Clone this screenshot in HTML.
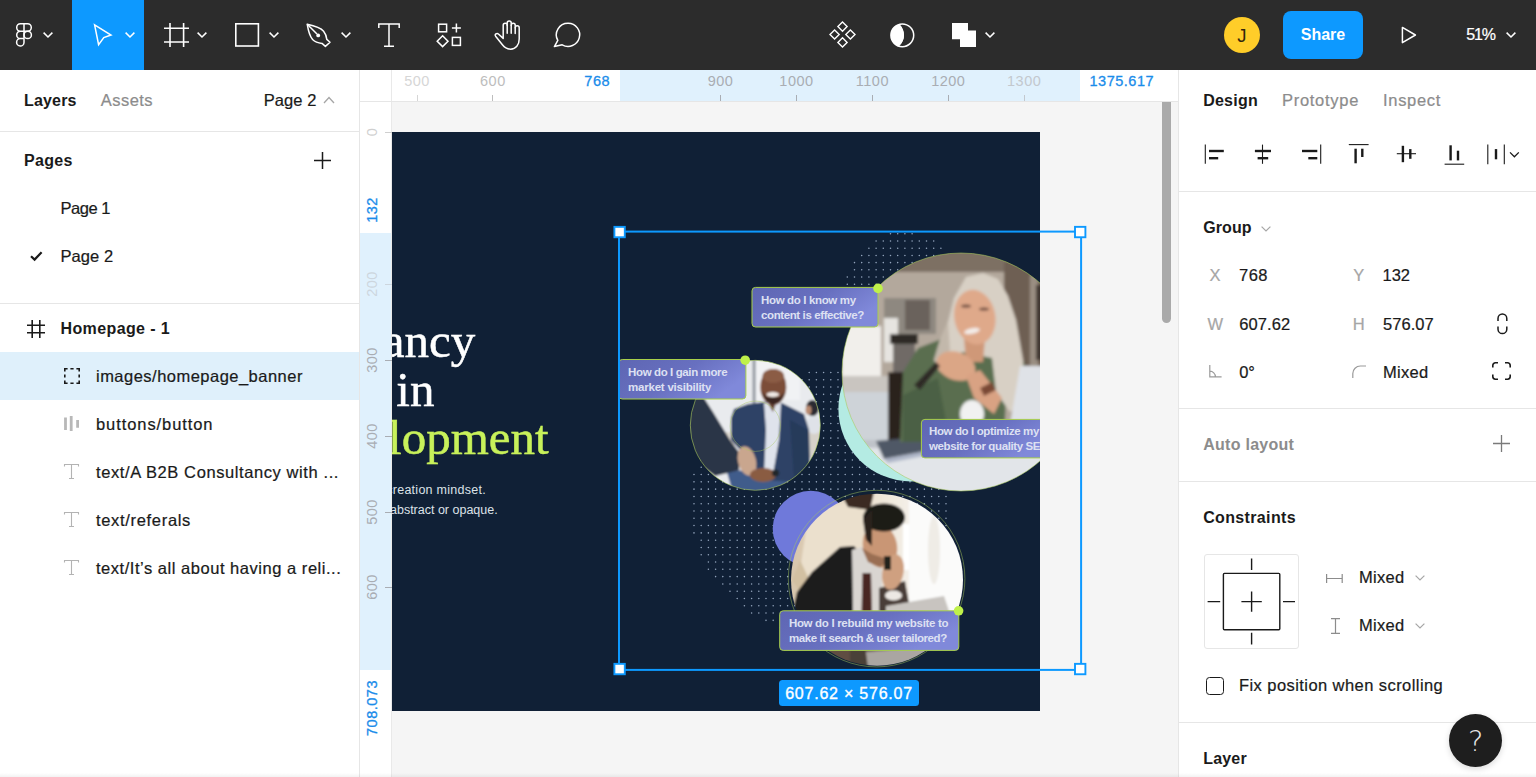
<!DOCTYPE html>
<html lang="en">
<head>
<meta charset="utf-8">
<title>Figma – Homepage</title>
<style>
*{box-sizing:border-box;margin:0;padding:0}
html,body{width:1536px;height:777px;overflow:hidden;background:#f5f5f5}
body{font-family:"Liberation Sans",Arial,sans-serif;font-size:16px;color:#1a1a1a;position:relative}
.abs{position:absolute}
.t{position:absolute;white-space:nowrap;line-height:20px;height:20px}
.b{font-weight:bold}
.t:not(.b){-webkit-text-stroke:.22px currentColor}
.g{color:#8c8c8c}
.g2{color:#a6a6a6;font-size:16.5px}
/* toolbar */
#toolbar{position:absolute;left:0;top:0;width:1536px;height:70px;background:#2c2c2c}
#toolbar svg{position:absolute;overflow:visible}
#tool-active{position:absolute;left:72px;top:0;width:72px;height:70px;background:#0d99ff}
/* left panel */
#left{position:absolute;left:0;top:70px;width:360px;height:707px;background:#fff;border-right:1px solid #e6e6e6}
.hr{position:absolute;height:1px;background:#e6e6e6}
/* rulers */
#ruler-top{position:absolute;left:360px;top:70px;width:818px;height:32px;background:#fff;border-bottom:1px solid #e6e6e6}
#ruler-left{position:absolute;left:360px;top:102px;width:32px;height:675px;background:#fff;border-right:1px solid #e9e9e9}
.rl{position:absolute;font-size:14.5px;letter-spacing:.5px;line-height:16px;height:16px;color:#b8b8b8;white-space:nowrap;transform:translateX(-50%)}
.rv{position:absolute;font-size:14.5px;letter-spacing:.5px;line-height:16px;height:16px;color:#b8b8b8;white-space:nowrap;transform-origin:0 0;transform:rotate(-90deg) translateX(-50%)}
.tick{position:absolute;background:#b0b0b0}
/* canvas */
#canvas{position:absolute;left:392px;top:102px;width:786px;height:675px;background:#f5f5f5;overflow:hidden}
#frame{position:absolute;left:0;top:30px;width:648px;height:579px;background:#102036;overflow:hidden}
.hd{position:absolute;white-space:nowrap;font-family:"Liberation Serif",serif;font-size:49px;line-height:56px;color:#fff;-webkit-text-stroke:.5px currentColor}
.sm{position:absolute;white-space:nowrap;font-size:12.5px;line-height:16px;color:#dde2e8;letter-spacing:.15px}
.lt{font-family:"Liberation Sans",sans-serif;font-weight:bold;font-size:11.5px;fill:#dde0f2}
.hdl{position:absolute;width:12.2px;height:12.2px;background:#fff;border:1.8px solid #0d99ff}
/* right panel */
#right{position:absolute;left:1178px;top:70px;width:358px;height:707px;background:#fff;border-left:1px solid #e6e6e6}
#right svg,#left svg{position:absolute;overflow:visible}
</style>
</head>
<body>

<!-- ================= TOOLBAR ================= -->
<div id="toolbar">
  <div id="tool-active"></div>
  <!-- figma menu -->
  <svg style="left:15.8px;top:23px" width="16" height="24" viewBox="0 0 16 24" fill="none" stroke="#fff" stroke-width="1.5"><path d="M8 .8H4.4a3.7 3.7 0 0 0 0 7.4H8zM8 .8h3.6a3.7 3.7 0 0 1 0 7.4H8zM8 8.2H4.4a3.7 3.7 0 0 0 0 7.4H8zM8 15.6H4.4A3.7 3.7 0 1 0 8 19.4z"/><circle cx="11.7" cy="11.9" r="3.7"/></svg>
  <svg style="left:43px;top:32px" width="10" height="6" viewBox="0 0 10 6"><path d="M0.6 0.6 L5 5 L9.4 0.6" fill="none" stroke="#fff" stroke-width="1.5"/></svg>
  <!-- move -->
  <svg style="left:93px;top:23px" width="21" height="24" viewBox="0 0 21 24"><path d="M1.6 1.9 L18 12 L10.8 14.6 L5.6 21.6 Z" fill="none" stroke="#fff" stroke-width="1.5" stroke-linejoin="miter"/></svg>
  <svg style="left:125px;top:32px" width="10" height="6" viewBox="0 0 10 6"><path d="M0.6 0.6 L5 5 L9.4 0.6" fill="none" stroke="#fff" stroke-width="1.5"/></svg>
  <!-- frame -->
  <svg style="left:164px;top:23px" width="25" height="24" viewBox="0 0 25 24"><path d="M6 0v24M19.6 0v24M0 5.2h25M0 19h25" stroke="#fff" stroke-width="1.6"/></svg>
  <svg style="left:196.5px;top:32px" width="10" height="6" viewBox="0 0 10 6"><path d="M0.6 0.6 L5 5 L9.4 0.6" fill="none" stroke="#fff" stroke-width="1.5"/></svg>
  <!-- rectangle -->
  <svg style="left:234.8px;top:23.2px" width="24" height="24" viewBox="0 0 24 24"><rect x=".8" y=".8" width="22.6" height="22.2" fill="none" stroke="#fff" stroke-width="1.6"/></svg>
  <svg style="left:268.8px;top:32px" width="10" height="6" viewBox="0 0 10 6"><path d="M0.6 0.6 L5 5 L9.4 0.6" fill="none" stroke="#fff" stroke-width="1.5"/></svg>
  <!-- pen -->
  <svg style="left:306px;top:22.5px" width="25" height="24" viewBox="0 0 25 24" fill="none" stroke="#fff" stroke-width="1.5" stroke-linejoin="round"><path d="M1.2 1.2 C8 2.6 14.5 4.4 17.6 8.2 C20 11.2 20.6 14 20.8 16.4 L24 19.2 L19.4 23.4 L16 20.4 C13 20.2 9.4 19.6 6.6 16.6 C3.4 13 2.2 7.4 1.2 1.2 Z"/><path d="M1.2 1.2 L11 11"/><circle cx="12.2" cy="12.4" r="1.9" fill="#fff" stroke="none"/></svg>
  <svg style="left:340.8px;top:32px" width="10" height="6" viewBox="0 0 10 6"><path d="M0.6 0.6 L5 5 L9.4 0.6" fill="none" stroke="#fff" stroke-width="1.5"/></svg>
  <!-- text -->
  <svg style="left:378px;top:23px" width="22" height="24" viewBox="0 0 22 24"><path d="M.8 5V1h20.4v4M11 1v22.2M6 23.2h10" fill="none" stroke="#fff" stroke-width="1.5"/></svg>
  <!-- resources -->
  <svg style="left:437px;top:22.6px" width="25" height="24" viewBox="0 0 25 24" fill="none" stroke="#fff" stroke-width="1.5"><rect x="1.6" y="1.2" width="8" height="7.6"/><path d="M19.4 .4v9M14.9 4.9h9"/><path d="M5.6 12.8l5.4 5.4-5.4 5.4-5.4-5.4z"/><rect x="15.4" y="14.4" width="8" height="8"/></svg>
  <!-- hand -->
  <svg style="left:494px;top:19px" width="28" height="32" viewBox="0 0 28 32" fill="none" stroke="#fff" stroke-width="1.5" stroke-linecap="round" stroke-linejoin="round"><path d="M9.2 16.5V6.2a2 2 0 0 1 4 0V4a2 2 0 0 1 4 0v2.2a2 2 0 0 1 4 0v2.6a2 2 0 0 1 4 0V20c0 6-3.4 10.2-8.6 10.2c-4 0-6-1.6-8.2-4.4L1.6 17.2c-1.2-1.8 1.2-3.6 2.8-2.2L9.2 19.4z"/><path d="M13.2 6.2v8M17.2 6.2v8M21.2 8.8v5.6"/></svg>
  <!-- comment -->
  <svg style="left:553px;top:22px" width="28" height="26" viewBox="0 0 28 26"><path d="M15.2 1.2a11.6 11.6 0 1 1 -6 21.6L1.4 24.6l3.4-6.2A11.6 11.6 0 0 1 15.2 1.2z" fill="none" stroke="#fff" stroke-width="1.5" stroke-linejoin="round"/></svg>
  <!-- component -->
  <svg style="left:829px;top:21px" width="27" height="27" viewBox="0 0 27 27" fill="none" stroke="#fff" stroke-width="1.4"><path d="M13.5 1l4.6 4.6-4.6 4.6-4.6-4.6zM5.6 8.9l4.6 4.6-4.6 4.6L1 13.5zM21.4 8.9l4.6 4.6-4.6 4.6-4.6-4.6zM13.5 16.8l4.6 4.6-4.6 4.6-4.6-4.6z"/></svg>
  <!-- mask -->
  <svg style="left:890px;top:22.6px" width="25" height="25" viewBox="0 0 25 25"><circle cx="12.3" cy="12.3" r="11.4" fill="none" stroke="#fff" stroke-width="1.5"/><path d="M12.3 .9A11.4 11.4 0 0 0 8.6 23.1C12.6 19.6 14 16 14 12.3S12.6 5 9.4 1.3A11.4 11.4 0 0 1 12.3 .9z" fill="#fff"/><path d="M9.6 1.2A11.4 11.4 0 0 0 9 23.2C12.4 20 14 16.4 14 12.3S12.6 4.6 9.6 1.2z" fill="#fff"/></svg>
  <!-- boolean -->
  <svg style="left:951.6px;top:23px" width="24" height="24" viewBox="0 0 24 24"><path d="M0 0h16v7.4h8V24H8v-7.8H0z" fill="#fff"/></svg>
  <svg style="left:985.4px;top:32px" width="10" height="6" viewBox="0 0 10 6"><path d="M0.6 0.6 L5 5 L9.4 0.6" fill="none" stroke="#fff" stroke-width="1.5"/></svg>
  <!-- avatar -->
  <div class="abs" style="left:1223.8px;top:16.8px;width:36.4px;height:36.4px;border-radius:50%;background:#ffcd29;color:#33260c;font-size:18.5px;line-height:37.6px;text-align:center">J</div>
  <!-- share -->
  <div class="abs b" style="left:1283px;top:10.5px;width:80px;height:48px;border-radius:8px;background:#0d99ff;color:#fff;font-size:16px;line-height:48px;text-align:center">Share</div>
  <!-- play -->
  <svg style="left:1401px;top:26px" width="16" height="18" viewBox="0 0 16 18"><path d="M1.4 1.4L14.4 9L1.4 16.6z" fill="none" stroke="#fff" stroke-width="1.5" stroke-linejoin="round"/></svg>
  <div class="t" style="left:1466.2px;top:24.5px;color:#fff;letter-spacing:-1.1px">51%</div>
  <svg style="left:1505.6px;top:32px" width="10" height="6" viewBox="0 0 10 6"><path d="M0.6 0.6 L5 5 L9.4 0.6" fill="none" stroke="#fff" stroke-width="1.5"/></svg>
</div>

<!-- ================= LEFT PANEL ================= -->
<div id="left">
  <div class="t b" style="left:24.1px;top:20.8px;letter-spacing:0.15px">Layers</div>
  <div class="t g" style="left:100.8px;top:19.8px;font-size:16.5px;letter-spacing:0.45px">Assets</div>
  <div class="t" style="left:263.7px;top:19.8px;font-size:16.5px;letter-spacing:0.07px">Page 2</div>
  <svg style="left:323px;top:26px" width="12" height="8" viewBox="0 0 12 8"><path d="M1 7 L6 1.5 L11 7" fill="none" stroke="#a6a6a6" stroke-width="1.3"/></svg>
  <div class="hr" style="left:0;top:61px;width:359px"></div>
  <div class="t b" style="left:24.1px;top:80.5px;letter-spacing:0.29px">Pages</div>
  <svg style="left:314px;top:81.5px" width="17" height="17" viewBox="0 0 17 17"><path d="M8.5 0v17M0 8.5h17" stroke="#1a1a1a" stroke-width="1.5"/></svg>
  <div class="t" style="left:60.5px;top:127.5px;font-size:16.5px;letter-spacing:-0.46px">Page 1</div>
  <svg style="left:30px;top:180.5px" width="13" height="10" viewBox="0 0 13 10"><path d="M1 5.2 L4.6 8.6 L11.6 1.2" fill="none" stroke="#1a1a1a" stroke-width="2.2"/></svg>
  <div class="t" style="left:60.5px;top:175.5px;font-size:16.5px;letter-spacing:0.07px">Page 2</div>
  <div class="hr" style="left:0;top:233px;width:359px"></div>
  <svg style="left:27px;top:250px" width="18" height="18" viewBox="0 0 18 18"><path d="M5.2 0v18M12.8 0v18M0 5.2h18M0 12.8h18" stroke="#1a1a1a" stroke-width="1.6"/></svg>
  <div class="t b" style="left:60.5px;top:248.5px;letter-spacing:0.38px">Homepage - 1</div>
  <div class="abs" style="left:0;top:282px;width:359px;height:48px;background:#dff0fb"></div>
  <svg style="left:63.5px;top:298.2px" width="16" height="16" viewBox="0 0 16 16"><path d="M0.8 3.6V0.8H3.6M6.4 0.8H9.6M12.4 0.8H15.2V3.6M15.2 6.4V9.6M15.2 12.4V15.2H12.4M9.6 15.2H6.4M3.6 15.2H0.8V12.4M0.8 9.6V6.4" fill="none" stroke="#1a1a1a" stroke-width="1.6"/></svg>
  <div class="t" style="left:96.0px;top:295.5px;font-size:16.5px;letter-spacing:0.48px">images/homepage_banner</div>
  <svg style="left:64px;top:346px" width="15" height="15" viewBox="0 0 15 15"><path d="M1.5 1.6v12.4M7.2 0v15M13.6 4v7.8" stroke="#b8b8b8" stroke-width="2.8"/></svg>
  <div class="t" style="left:96.0px;top:343.5px;font-size:16.5px;letter-spacing:0.92px">buttons/button</div>
  <svg style="left:64px;top:394.3px" width="15" height="15" viewBox="0 0 15 15"><path d="M0.5 2.6V0.5H14.5V2.6M7.5 0.5V14.5M5 14.5H10" fill="none" stroke="#b3b3b3" stroke-width="1.1"/></svg>
  <div class="t" style="left:96.0px;top:391.5px;font-size:16.5px;letter-spacing:0.59px">text/A B2B Consultancy with ...</div>
  <svg style="left:64px;top:442.3px" width="15" height="15" viewBox="0 0 15 15"><path d="M0.5 2.6V0.5H14.5V2.6M7.5 0.5V14.5M5 14.5H10" fill="none" stroke="#b3b3b3" stroke-width="1.1"/></svg>
  <div class="t" style="left:96.0px;top:439.5px;font-size:16.5px;letter-spacing:0.68px">text/referals</div>
  <svg style="left:64px;top:490.3px" width="15" height="15" viewBox="0 0 15 15"><path d="M0.5 2.6V0.5H14.5V2.6M7.5 0.5V14.5M5 14.5H10" fill="none" stroke="#b3b3b3" stroke-width="1.1"/></svg>
  <div class="t" style="left:96.0px;top:487.5px;font-size:16.5px;letter-spacing:0.53px">text/It’s all about having a reli...</div>
</div>

<!-- ================= RULERS ================= -->
<div id="ruler-top">
  <div class="abs" style="left:30.7px;top:0;width:1px;height:31px;background:#e9e9e9"></div>
  <div class="abs" style="left:260px;top:0;width:460px;height:31px;background:#e0f1fd"></div>
  <div class="rl" style="left:57.0px;top:2.7px;color:#d6d6d6">500</div>
  <div class="tick" style="left:56.5px;top:25px;width:1px;height:6px;background:#d6d6d6"></div>
  <div class="rl" style="left:132.9px;top:2.7px;color:#bdbdbd">600</div>
  <div class="tick" style="left:132.4px;top:25px;width:1px;height:6px;background:#bdbdbd"></div>
  <div class="rl" style="left:360.6px;top:2.7px;color:#a9adb3">900</div>
  <div class="tick" style="left:360.1px;top:25px;width:1px;height:6px;background:#a9adb3"></div>
  <div class="rl" style="left:436.5px;top:2.7px;color:#a9adb3">1000</div>
  <div class="tick" style="left:436.0px;top:25px;width:1px;height:6px;background:#a9adb3"></div>
  <div class="rl" style="left:512.4px;top:2.7px;color:#a9adb3">1100</div>
  <div class="tick" style="left:511.9px;top:25px;width:1px;height:6px;background:#a9adb3"></div>
  <div class="rl" style="left:588.3px;top:2.7px;color:#a9adb3">1200</div>
  <div class="tick" style="left:587.8px;top:25px;width:1px;height:6px;background:#a9adb3"></div>
  <div class="rl" style="left:664.2px;top:2.7px;color:#c3c8ce">1300</div>
  <div class="tick" style="left:663.7px;top:25px;width:1px;height:6px;background:#c3c8ce"></div>
  <div class="rl" style="left:237.2px;top:2.7px;color:#1a8cea;-webkit-text-stroke:.3px #1a8cea">768</div>
  <div class="rl" style="left:761.8px;top:2.7px;color:#1a8cea;-webkit-text-stroke:.3px #1a8cea">1375.617</div>
</div>
<div id="ruler-left">
  <div class="abs" style="left:0;top:130.5px;width:31px;height:437px;background:#e0f1fd"></div>
  <div class="rv" style="left:4.3px;top:30.0px;color:#cfcfcf">0</div>
  <div class="tick" style="left:25px;top:30.0px;width:7px;height:1px;background:#cfcfcf"></div>
  <div class="rv" style="left:4.3px;top:181.8px;color:#cdd6de">200</div>
  <div class="tick" style="left:25px;top:181.8px;width:7px;height:1px;background:#cdd6de"></div>
  <div class="rv" style="left:4.3px;top:257.7px;color:#a9adb3">300</div>
  <div class="tick" style="left:25px;top:257.7px;width:7px;height:1px;background:#a9adb3"></div>
  <div class="rv" style="left:4.3px;top:333.6px;color:#a9adb3">400</div>
  <div class="tick" style="left:25px;top:333.6px;width:7px;height:1px;background:#a9adb3"></div>
  <div class="rv" style="left:4.3px;top:409.5px;color:#a9adb3">500</div>
  <div class="tick" style="left:25px;top:409.5px;width:7px;height:1px;background:#a9adb3"></div>
  <div class="rv" style="left:4.3px;top:485.4px;color:#a9adb3">600</div>
  <div class="tick" style="left:25px;top:485.4px;width:7px;height:1px;background:#a9adb3"></div>
  <div class="rv" style="left:4.3px;top:108.0px;color:#1a8cea;-webkit-text-stroke:.3px #1a8cea">132</div>
  <div class="rv" style="left:4.3px;top:606.2px;color:#1a8cea;-webkit-text-stroke:.3px #1a8cea">708.073</div>
</div>

<!-- ================= CANVAS ================= -->
<div id="canvas">
  <div id="frame">
<!--FS-->
<svg class="abs" style="left:0;top:0" width="648" height="579" viewBox="0 0 648 579">
<defs>
<pattern id="dots" width="7.2" height="7.2" patternUnits="userSpaceOnUse" patternTransform="translate(-0.4 -2.8)"><circle cx="3.6" cy="3.6" r="0.85" fill="#a9b8cc"/></pattern>
<filter id="b1" x="-10%" y="-10%" width="120%" height="120%"><feGaussianBlur stdDeviation="1.6"/></filter>
<filter id="b2" x="-10%" y="-10%" width="120%" height="120%"><feGaussianBlur stdDeviation="1.1"/></filter>
<filter id="b3" x="-10%" y="-10%" width="120%" height="120%"><feGaussianBlur stdDeviation="3"/></filter>
<linearGradient id="lab" x1="0" x2="1" y1="0" y2=".45"><stop offset="0" stop-color="#5e66b3"/><stop offset=".55" stop-color="#6870c0"/><stop offset="1" stop-color="#8089da"/></linearGradient>
<linearGradient id="wbg" x1="0" x2="0" y1="0" y2="1"><stop offset="0" stop-color="#5f564c"/><stop offset=".25" stop-color="#9a8b7a"/><stop offset=".6" stop-color="#b5a898"/><stop offset="1" stop-color="#d8d8d8"/></linearGradient>
<linearGradient id="pbg" x1="0" x2="1" y1="0" y2="0"><stop offset="0" stop-color="#d6c4aa"/><stop offset=".45" stop-color="#ece2d2"/><stop offset=".75" stop-color="#f6f3ee"/><stop offset="1" stop-color="#ffffff"/></linearGradient>

<clipPath id="cd1"><circle cx="424.0" cy="362.0" r="123" fill="#000" /></clipPath>
<clipPath id="cd2"><circle cx="503.0" cy="153.0" r="52" fill="#000" /></clipPath>
<clipPath id="cw"><circle cx="569.0" cy="240.0" r="119" fill="#000" /></clipPath>
<clipPath id="ch"><circle cx="363.3" cy="293.3" r="65" fill="#000" /></clipPath>
<clipPath id="cp"><circle cx="485.0" cy="447.7" r="86" fill="#000" /></clipPath>
</defs>
<path d="M417.20 240.50h28.82M388.40 247.79h86.42M374.00 255.08h115.22M359.60 262.37h144.02M352.40 269.66h158.42M338.00 276.95h180.02M330.80 284.24h194.42M330.80 291.53h201.62M323.60 298.82h216.02M316.40 306.11h223.22M316.40 313.40h230.42M309.20 320.69h237.62M309.20 327.98h237.62M309.20 335.27h244.82M302.00 342.56h252.02M302.00 349.85h252.02M302.00 357.14h252.02M302.00 364.43h252.02M302.00 371.72h252.02M302.00 379.01h252.02M302.00 386.30h252.02M302.00 393.59h252.02M302.00 400.88h252.02M309.20 408.17h244.82M309.20 415.46h237.62M309.20 422.75h237.62M316.40 430.04h230.42M316.40 437.33h223.22M323.60 444.62h208.82M330.80 451.91h201.62M338.00 459.20h187.22M345.20 466.49h172.82M352.40 473.78h158.42M359.60 481.07h136.82M374.00 488.36h108.02M388.40 495.65h79.22" fill="none" stroke="#93a4bc" stroke-width="1.55" stroke-linecap="round" stroke-dasharray="0 7.2"/>
<path d="M498.50 101.80h21.62M484.10 109.00h57.62M476.90 116.20h72.02M469.70 123.40h86.42M462.50 130.60h100.82M462.50 137.80h100.82M455.30 145.00h108.02M455.30 152.20h115.22M455.30 159.40h115.22M455.30 166.60h115.22M455.30 173.80h108.02M462.50 181.00h100.82M462.50 188.20h100.82M469.70 195.40h86.42M476.90 202.60h72.02M484.10 209.80h57.62M498.50 217.00h21.62" fill="none" stroke="#93a4bc" stroke-width="1.55" stroke-linecap="round" stroke-dasharray="0 7.2"/>
<circle cx="519.0" cy="276.8" r="72.6" fill="#b4ebe3" />
<circle cx="418.7" cy="396.8" r="38" fill="#6f79da" />
<g clip-path="url(#cw)"><g filter="url(#b1)"><rect x="446.0" y="118.0" width="246.0" height="244.0" fill="#b3a89c" /><rect x="446.0" y="118.0" width="246.0" height="22.0" fill="#7d6f63" /><rect x="492.0" y="166.0" width="52.0" height="36.0" fill="#8e8880" /><rect x="513.0" y="168.0" width="25.0" height="30.0" fill="#6a625b" /><rect x="612.0" y="130.0" width="80.0" height="110.0" fill="#6e5f52" /><rect x="638.0" y="143.0" width="8.0" height="97.0" fill="#9a8e82" /><rect x="644.0" y="153.0" width="14.0" height="75.0" fill="#3f3933" /><rect x="450.0" y="194.0" width="39.0" height="50.0" fill="#f1efeb" /><rect x="492.0" y="186.0" width="14.0" height="44.0" fill="#e6e4e0" /><rect x="450.0" y="244.0" width="64.0" height="16.0" fill="#c9c5c0" /><rect x="450.0" y="260.0" width="64.0" height="54.0" fill="#ced3d8" /><rect x="498.0" y="202.0" width="28.0" height="10.0" fill="#2d2925" /><rect x="501.0" y="212.0" width="22.0" height="28.0" fill="#6f6a66" /><rect x="496.0" y="242.0" width="15.0" height="72.0" fill="#29241f" /><rect x="496.0" y="240.0" width="42.0" height="9.0" fill="#29241f" /><rect x="514.0" y="260.0" width="8.0" height="54.0" fill="#29241f" /><rect x="446.0" y="308.0" width="246.0" height="56.0" fill="#e2e5e9" /><rect x="446.0" y="308.0" width="122.0" height="8.0" fill="#bfc3c9" /><polygon points="484.0,309.0 530.0,305.0 535.0,319.0 492.0,327.0" fill="#4f5866" /><polygon points="492.0,327.0 535.0,319.0 537.0,323.0 496.0,331.0" fill="#aeb6c8" /><polygon points="552.0,206.0 526.0,216.0 511.0,240.0 508.0,310.0 612.0,310.0 614.0,266.0 634.0,256.0 632.0,230.0 608.0,213.0" fill="#5a6e50" /><polygon points="511.0,263.0 546.0,246.0 558.0,310.0 511.0,310.0" fill="#4c6045" /><polygon points="612.0,240.0 632.0,230.0 636.0,260.0 616.0,268.0" fill="#62775a" /><polygon points="591.0,141.0 574.0,145.0 562.0,166.0 556.0,190.0 548.0,208.0 542.0,228.0 548.0,240.0 564.0,232.0 570.0,220.0 600.0,226.0 604.0,260.0 618.0,280.0 632.0,270.0 631.0,228.0 624.0,188.0 616.0,164.0 606.0,147.0" fill="#d8d0c5" /><polygon points="556.0,190.0 548.0,208.0 542.0,228.0 548.0,240.0 558.0,218.0" fill="#c2b8ab" /><ellipse cx="580.0" cy="282.0" rx="12" ry="14" fill="#f1f1f1" /><polygon points="572.0,206.0 593.0,206.0 591.0,230.0 574.0,230.0" fill="#cf9878" /><ellipse cx="583.0" cy="185.0" rx="20.5" ry="27.5" fill="#dfa98a" transform="rotate(-10 584 186)"/><ellipse cx="580.0" cy="199.0" rx="8" ry="2.8" fill="#f3ece8" transform="rotate(-12 580 199)"/><ellipse cx="574.0" cy="174.0" rx="5" ry="1.6" fill="#6b4a3c" /><ellipse cx="592.0" cy="177.0" rx="5" ry="1.6" fill="#6b4a3c" /><ellipse cx="564.0" cy="234.0" rx="20" ry="14" fill="#dba686" transform="rotate(20 564 234)"/><polygon points="574.0,244.0 588.0,238.0 610.0,266.0 602.0,282.0 582.0,266.0" fill="#d9a283" /><polygon points="588.0,256.0 600.0,250.0 604.0,258.0 592.0,264.0" fill="#7a4a35" /><polygon points="522.0,253.0 544.0,230.0 548.0,234.0 528.0,258.0" fill="#2e2a28" /><polygon points="628.0,234.0 658.0,234.0 658.0,304.0 616.0,304.0" fill="#dfe2e7" /></g></g>
<circle cx="569.0" cy="240.0" r="119" fill="none" stroke="#a9c95a" stroke-opacity=".7" stroke-width=".8"/>
<g clip-path="url(#ch)"><g filter="url(#b2)"><rect x="296.0" y="226.0" width="136.0" height="136.0" fill="#e9ebee" /><rect x="360.4" y="226.0" width="3.4" height="46.0" fill="#9da3aa" /><rect x="364.0" y="226.0" width="44.0" height="42.0" fill="#f1f2f4" /><rect x="328.0" y="300.0" width="40.0" height="13.0" fill="#ddd8d0" /><rect x="412.0" y="299.0" width="20.0" height="27.0" fill="#d6d1c9" /><ellipse cx="420.5" cy="276.0" rx="6.5" ry="8" fill="#2b2a30" /><ellipse cx="416.5" cy="278.0" rx="3" ry="4.5" fill="#b98a70" /><ellipse cx="422.0" cy="293.0" rx="8" ry="9" fill="#dfe2e8" /><polygon points="335.0,340.0 378.0,334.0 400.0,348.0 378.0,362.0 341.0,362.0" fill="#3f5b8b" /><polygon points="342.0,277.0 356.0,272.0 372.0,270.0 390.0,271.0 412.0,282.0 417.0,298.0 418.0,334.0 400.0,350.0 374.0,348.0 360.0,330.0 350.0,320.0 339.0,308.0 339.0,286.0" fill="#2d4366" /><polygon points="398.0,288.0 416.0,298.0 417.0,334.0 402.0,346.0" fill="#263a5a" /><polygon points="372.0,271.0 389.0,271.0 387.0,308.0 381.0,342.0 372.0,342.0 374.0,298.0" fill="#dfe3ec" /><polygon points="376.0,271.0 384.0,271.0 381.0,280.0" fill="#6b4634" /><ellipse cx="381.3" cy="255.0" rx="13" ry="18" fill="#7b4d39" /><ellipse cx="381.3" cy="244.0" rx="11" ry="7" fill="#8b5b45" /><polygon points="370.0,260.0 374.0,269.0 381.0,273.0 389.0,269.0 393.0,260.0 388.0,265.0 375.0,265.0" fill="#3a2620" /><ellipse cx="380.8" cy="262.6" rx="6.2" ry="2.5" fill="#f0eae6" /><polygon points="296.0,266.0 312.0,266.0 321.0,280.0 338.0,308.0 349.0,323.0 348.0,338.0 323.0,344.0 298.0,326.0" fill="#2a3446" /><polygon points="348.0,323.0 351.0,324.0 350.0,339.0 347.0,338.0" fill="#e8eaee" /><ellipse cx="355.0" cy="329.0" rx="9" ry="15" fill="#c9a68e" transform="rotate(-15 355 329)"/><ellipse cx="371.0" cy="343.0" rx="13" ry="7" fill="#8a5b43" /><circle cx="383.5" cy="341.0" r="3.6" fill="#22252a" /></g></g>
<circle cx="363.3" cy="293.3" r="65" fill="none" stroke="#a9c95a" stroke-opacity=".75" stroke-width=".8"/>
<circle cx="363.3" cy="294.2" r="25.2" fill="none" stroke="#a9c95a" stroke-opacity=".55" stroke-width=".7"/>
<g clip-path="url(#cp)"><g filter="url(#b2)"><rect x="396.0" y="358.0" width="178.0" height="178.0" fill="url(#pbg)" /><polygon points="414.0,398.0 430.0,376.0 458.0,370.0 474.0,376.0 470.0,428.0 423.0,460.0 408.0,438.0" fill="#ebe0cd" /><polygon points="408.0,428.0 423.0,460.0 413.0,468.0 400.0,448.0" fill="#d2c0a2" /><polygon points="448.0,360.0 482.0,360.0 478.0,378.0 456.0,375.0" fill="#3b2b22" /><rect x="511.0" y="392.0" width="6.0" height="46.0" fill="#ffffff" /><rect x="517.0" y="368.0" width="61.0" height="120.0" fill="#fbfbfa" /><ellipse cx="542.0" cy="418.0" rx="6" ry="34" fill="#efece6" /><polygon points="400.0,482.0 405.0,460.0 420.0,440.0 448.0,415.0 462.0,414.0 474.0,428.0 488.0,458.0 488.0,482.0" fill="#1c1a1c" /><polygon points="460.0,418.0 473.0,414.0 490.0,430.0 490.0,482.0 461.0,482.0" fill="#d9d5d1" /><polygon points="470.5,441.0 479.0,441.0 480.0,482.0 469.5,482.0" fill="#4a2521" /><polygon points="487.0,456.0 513.0,449.0 519.0,482.0 487.0,482.0" fill="#4a3d38" /><ellipse cx="488.0" cy="414.0" rx="17" ry="22" fill="#c99674" transform="rotate(-14 488 414)"/><polygon points="470.0,416.0 476.0,430.0 488.0,435.0 498.0,428.0 492.0,426.0 480.0,422.0" fill="#9a6e52" /><ellipse cx="492.0" cy="385.5" rx="21" ry="14" fill="#1f1b19" /><polygon points="471.0,388.0 480.0,378.0 480.0,414.0 474.0,408.0" fill="#2a211c" /><ellipse cx="501.0" cy="440.0" rx="10.5" ry="18" fill="#cfa080" transform="rotate(12 501 440)"/><rect x="492.0" y="424.0" width="7.0" height="14.0" fill="#23211f" /><ellipse cx="501.5" cy="463.5" rx="8.5" ry="5" fill="#ece8e4" /><polygon points="494.0,474.0 552.0,464.0 558.0,482.0 494.0,482.0" fill="#c8c4c0" /><rect x="396.0" y="514.0" width="178.0" height="22.0" fill="#5e4e43" /><polygon points="458.0,518.0 473.0,516.0 476.0,536.0 458.0,536.0" fill="#4a4038" /><polygon points="474.0,520.0 542.0,514.0 536.0,536.0 476.0,536.0" fill="#aaa6a2" /></g></g>
<circle cx="484.6" cy="446.6" r="88.3" fill="none" stroke="#a9c95a" stroke-opacity=".6" stroke-width=".8"/>
<rect x="360.0" y="155.4" width="126.0" height="39.6" rx="3.5" fill="url(#lab)" stroke="#a8cf4a" stroke-width="1"/><text x="369.0" y="172.4" letter-spacing="-0.35" class="lt">How do I know my</text><text x="369.0" y="186.8" letter-spacing="-0.39" class="lt">content is effective?</text><circle cx="486.0" cy="156.4" r="4.8" fill="#bff04a" />
<rect x="226.7" y="227.5" width="127.2" height="39.5" rx="3.5" fill="url(#lab)" stroke="#a8cf4a" stroke-width="1"/><text x="236.1" y="244.4" letter-spacing="-0.39" class="lt">How do I gain more</text><text x="236.1" y="258.8" letter-spacing="-0.23" class="lt">market visibility</text><circle cx="353.2" cy="228.2" r="4.8" fill="#bff04a" />
<rect x="529.4" y="287.4" width="128.6" height="38.5" rx="3.5" fill="url(#lab)" stroke="#a8cf4a" stroke-width="1"/><text x="537.0" y="303.1" letter-spacing="-0.38" class="lt">How do I optimize my</text><text x="537.0" y="317.6" letter-spacing="-0.38" class="lt">website for quality SEO?</text>
<rect x="387.7" y="478.8" width="179.1" height="39.6" rx="3.5" fill="url(#lab)" stroke="#a8cf4a" stroke-width="1"/><text x="396.9" y="495.2" letter-spacing="-0.31" class="lt">How do I rebuild my website to</text><text x="396.9" y="509.6" letter-spacing="-0.41" class="lt">make it search &amp; user tailored?</text><circle cx="566.6" cy="478.8" r="4.8" fill="#bff04a" />
</svg>
<div class="hd" style="right:564.8px;top:181.3px">A B2B Consultancy</div>
<div class="hd" style="right:605.6px;top:229.5px">with expertise in</div>
<div class="hd" style="right:491.3px;top:277.9px;color:#c8f15a">web development</div>
<div class="sm" style="right:554px;top:349.7px;letter-spacing:.27px">We bring a value creation mindset.</div>
<div class="sm" style="right:542.3px;top:370.4px;letter-spacing:0">Nothing we do is abstract or opaque.</div>
<!--FE-->
  </div>
  <svg class="abs" style="left:0;top:0;overflow:visible" width="786" height="675"><rect x="227.00" y="129.60" width="462.10" height="438.30" fill="none" stroke="#0d99ff" stroke-width="2"/><rect x="222.40" y="124.85" width="10.4" height="10.4" fill="#fff" stroke="#0d99ff" stroke-width="1.9"/><rect x="683.00" y="124.85" width="10.4" height="10.4" fill="#fff" stroke="#0d99ff" stroke-width="1.9"/><rect x="222.40" y="561.85" width="10.4" height="10.4" fill="#fff" stroke="#0d99ff" stroke-width="1.9"/><rect x="683.00" y="561.85" width="10.4" height="10.4" fill="#fff" stroke="#0d99ff" stroke-width="1.9"/></svg>
  <div class="abs" style="left:387.3px;top:577.9px;width:139.5px;height:25.8px;border-radius:3.5px;background:#0d99ff;color:#fff;font-size:16px;line-height:27.4px;text-align:center;letter-spacing:.78px;white-space:nowrap;-webkit-text-stroke:.35px #fff">607.62 × 576.07</div>
  <div class="abs" style="left:769.8px;top:0px;width:9px;height:220.5px;border-radius:0 0 4.5px 4.5px;background:#aaa"></div>
</div>

<!-- ================= RIGHT PANEL ================= -->
<div id="right">
  <div class="t b" style="left:24.2px;top:20.5px;letter-spacing:0.24px">Design</div>
  <div class="t g" style="left:103.0px;top:19.5px;font-size:16.5px;letter-spacing:0.71px">Prototype</div>
  <div class="t g" style="left:204.0px;top:19.5px;font-size:16.5px;letter-spacing:0.69px">Inspect</div>
  <svg style="left:0;top:0" width="357" height="200"><path d="M26.3 74.6L26.3 93.8" stroke="#1a1a1a" stroke-width="1.1"/><path d="M30 81L44.8 81" stroke="#1a1a1a" stroke-width="2.4"/><path d="M30 88.2L39.2 88.2" stroke="#1a1a1a" stroke-width="2.4"/><path d="M83.5 74.6L83.5 93.8" stroke="#1a1a1a" stroke-width="1.1"/><path d="M75.9 81L92 81" stroke="#1a1a1a" stroke-width="2.4"/><path d="M78.6 88.2L89.2 88.2" stroke="#1a1a1a" stroke-width="2.4"/><path d="M141.7 74.6L141.7 93.8" stroke="#1a1a1a" stroke-width="1.1"/><path d="M123 81L138.3 81" stroke="#1a1a1a" stroke-width="2.4"/><path d="M129.3 88.2L138.3 88.2" stroke="#1a1a1a" stroke-width="2.4"/><path d="M169.8 74.6L189.6 74.6" stroke="#1a1a1a" stroke-width="1.1"/><path d="M176.6 78.7L176.6 93.3" stroke="#1a1a1a" stroke-width="2.4"/><path d="M183.3 78.7L183.3 87" stroke="#1a1a1a" stroke-width="2.4"/><path d="M217.8 83.7L237 83.7" stroke="#1a1a1a" stroke-width="1.1"/><path d="M223.9 75.8L223.9 92.2" stroke="#1a1a1a" stroke-width="2.4"/><path d="M231.3 79.1L231.3 88.8" stroke="#1a1a1a" stroke-width="2.4"/><path d="M265.6 94.2L285.2 94.2" stroke="#1a1a1a" stroke-width="1.1"/><path d="M271.6 75.3L271.6 90.4" stroke="#1a1a1a" stroke-width="2.4"/><path d="M279 80.7L279 90.4" stroke="#1a1a1a" stroke-width="2.4"/><path d="M308.8 74.6L308.8 94.2" stroke="#1a1a1a" stroke-width="1.1"/><path d="M317 79.1L317 89.3" stroke="#1a1a1a" stroke-width="2.4"/><path d="M325.3 74.6L325.3 94.2" stroke="#1a1a1a" stroke-width="1.1"/><path d="M331 82.4L335.4 86.8L339.8 82.4" fill="none" stroke="#1a1a1a" stroke-width="1.3"/></svg>
  <div class="hr" style="left:0;top:121px;width:357px"></div>
  <div class="t b" style="left:24.2px;top:148.2px;letter-spacing:0.10px">Group</div>
  <svg style="left:82px;top:155.5px" width="10" height="6" viewBox="0 0 10 6"><path d="M.6 .6L5 5L9.4 .6" fill="none" stroke="#a6a6a6" stroke-width="1.2"/></svg>
  <div class="t g2" style="left:30.6px;top:195.2px">X</div>
  <div class="t" style="left:60.0px;top:195.2px;font-size:16.5px;letter-spacing:0.49px">768</div>
  <div class="t g2" style="left:174.2px;top:195.2px">Y</div>
  <div class="t" style="left:203.6px;top:195.2px;font-size:16.5px;letter-spacing:-0.05px">132</div>
  <div class="t g2" style="left:28.4px;top:243.5px;letter-spacing:-1px">W</div>
  <div class="t" style="left:60.3px;top:243.5px;font-size:16.5px;letter-spacing:0.07px">607.62</div>
  <div class="t g2" style="left:173.8px;top:243.5px">H</div>
  <div class="t" style="left:203.9px;top:243.5px;font-size:16.5px;letter-spacing:0.07px">576.07</div>
  <svg style="left:318px;top:243px" width="11" height="22" viewBox="0 0 11 22" fill="none" stroke="#1a1a1a" stroke-width="1.5"><path d="M1 8V5.4a4.4 4.4 0 0 1 8.8 0V8M1 13.6v2.6a4.4 4.4 0 0 0 8.8 0v-2.6"/></svg>
  <svg style="left:29.5px;top:295px" width="13" height="13" viewBox="0 0 13 13" fill="none" stroke="#9a9a9a" stroke-width="1.2"><path d="M.8 0v11.8H12.6M.8 6.2a5.6 5.6 0 0 1 5.6 5.6"/></svg>
  <div class="t" style="left:60.3px;top:291.5px;font-size:16.5px;letter-spacing:-0.24px">0°</div>
  <svg style="left:172.5px;top:295px" width="14" height="13" viewBox="0 0 14 13" fill="none" stroke="#9a9a9a" stroke-width="1.2"><path d="M.8 13V8.6a7.6 7.6 0 0 1 7.6-7.6H14"/></svg>
  <div class="t" style="left:203.9px;top:291.5px;font-size:16.5px;letter-spacing:0.31px">Mixed</div>
  <svg style="left:313.4px;top:292.4px" width="19" height="18" viewBox="0 0 19 18" fill="none" stroke="#1a1a1a" stroke-width="1.6"><path d="M.8 5.6V3.4A2.6 2.6 0 0 1 3.4 .8H6M13 .8h2.6a2.6 2.6 0 0 1 2.6 2.6v2.2M18.2 12.4v2.2a2.6 2.6 0 0 1-2.6 2.6H13M6 17.2H3.4A2.6 2.6 0 0 1 .8 14.6v-2.2"/></svg>
  <div class="hr" style="left:0;top:338px;width:357px"></div>
  <div class="t b g" style="left:24.2px;top:365.0px;letter-spacing:0.27px">Auto layout</div>
  <svg style="left:314.2px;top:365.4px" width="17" height="17" viewBox="0 0 17 17"><path d="M8.5 0v17M0 8.5h17" stroke="#7a7a7a" stroke-width="1.3"/></svg>
  <div class="hr" style="left:0;top:411px;width:357px"></div>
  <div class="t b" style="left:24.2px;top:437.5px;letter-spacing:0.35px">Constraints</div>
  <div class="abs" style="left:24.6px;top:483.8px;width:95.4px;height:95.6px;border:1px solid #e6e6e6;border-radius:3px"></div>
  <svg style="left:24.6px;top:483.8px" width="96" height="96" viewBox="0 0 96 96" fill="none" stroke="#1a1a1a" stroke-width="1.4"><rect x="19.4" y="19.4" width="56.4" height="56.4" rx="1"/><path d="M47.6 4.4v11.6M47.6 78.8v11.6M3.6 47.6h12.6M79 47.6h12M47.6 37.4v20.4M37.4 47.6h20.4"/></svg>
  <svg style="left:147px;top:502.5px" width="17" height="11" viewBox="0 0 17 11" fill="none" stroke="#8c8c8c" stroke-width="1.2"><path d="M.6 1v9M16.2 1v9M.6 5.5h15.6"/></svg>
  <div class="t" style="left:179.9px;top:496.5px;font-size:16.5px;letter-spacing:0.31px">Mixed</div>
  <svg style="left:235.5px;top:505px" width="10" height="6" viewBox="0 0 10 6"><path d="M.6 .6L5 5L9.4 .6" fill="none" stroke="#a6a6a6" stroke-width="1.2"/></svg>
  <svg style="left:151.6px;top:548px" width="9" height="16" viewBox="0 0 9 16" fill="none" stroke="#8c8c8c" stroke-width="1.2"><path d="M0 .6h9M0 15.4h9M4.5 .6v14.8"/></svg>
  <div class="t" style="left:179.9px;top:544.5px;font-size:16.5px;letter-spacing:0.31px">Mixed</div>
  <svg style="left:235.5px;top:553px" width="10" height="6" viewBox="0 0 10 6"><path d="M.6 .6L5 5L9.4 .6" fill="none" stroke="#a6a6a6" stroke-width="1.2"/></svg>
  <div class="abs" style="left:26.6px;top:607px;width:18px;height:17.6px;border:1.5px solid #1a1a1a;border-radius:3.5px"></div>
  <div class="t" style="left:60.0px;top:604.8px;font-size:16.5px;letter-spacing:0.43px">Fix position when scrolling</div>
  <div class="hr" style="left:0;top:651.5px;width:357px"></div>
  <div class="t b" style="left:24.2px;top:679.2px;letter-spacing:0.18px">Layer</div>
</div>

<div class="abs" style="left:1448.5px;top:713.5px;width:53.6px;height:53.8px;border-radius:50%;background:#1e1e1e;box-shadow:0 2px 6px rgba(0,0,0,.15)"></div><div class="abs" style="left:1448.5px;top:713.5px;width:53.6px;height:53.8px;color:#e6e6e6;font-family:'DejaVu Sans','Liberation Sans',sans-serif;font-weight:200;font-size:29px;line-height:54px;text-align:center;text-indent:1px">?</div>
<div id="btm" class="abs" style="left:0;top:773px;width:1536px;height:4px;background:linear-gradient(rgba(0,0,0,0),rgba(0,0,0,.05))"></div>
</body>
</html>
